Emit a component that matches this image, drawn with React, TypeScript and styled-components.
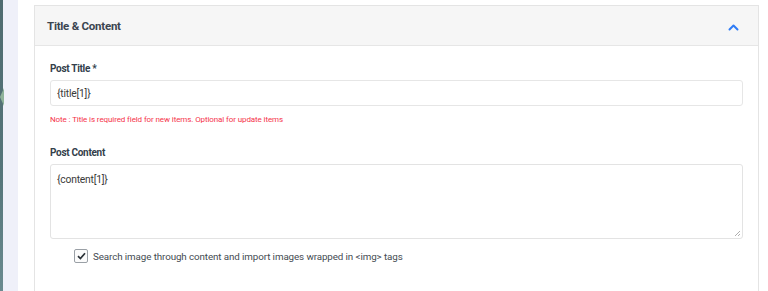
import { FunctionComponent } from 'react';
import styled, { createGlobalStyle } from 'styled-components';

const GlobalStyle = createGlobalStyle`
	html, body {
		margin: 0;
		padding: 0;
		background: #ffffff;
	}
	body {
		font-family: Roboto, 'Liberation Sans', Arial, sans-serif;
	}
`;

const Page = styled.div`
	display: flex;
	height: 291px;
	overflow: hidden;
`;

const Sidebar = styled.div`
	position: relative;
	width: 3px;
	flex-shrink: 0;
	background: linear-gradient(#4f6b70, #55757a 60%, #6a8a8f);
`;

const SidebarNotch = styled.div`
	position: absolute;
	top: 88px;
	left: 0;
	width: 4px;
	height: 18px;
	background: #8fb39a;
	clip-path: polygon(0 50%, 100% 0, 100% 100%);
`;

const Gutter = styled.div`
	width: 15px;
	flex-shrink: 0;
	background: #eff0f9;
`;

const Main = styled.div`
	flex: 1;
	padding: 5px 9px 0 16px;
	background: #ffffff;
`;

const Card = styled.section`
	border: 1px solid #e4e4e4;
	border-bottom: none;
	height: 100%;
	box-sizing: border-box;
`;

const CardHeader = styled.header`
	display: flex;
	align-items: center;
	justify-content: space-between;
	height: 39px;
	padding: 0 19px 0 12px;
	background: #f6f6f6;
	border-bottom: 1px solid #e6e6e6;
`;

const CardTitle = styled.h3`
	margin: 0;
	font-size: 11.5px;
	font-weight: 700;
	letter-spacing: -0.25px;
	color: #3b4550;
`;

const Body = styled.div`
	padding: 16px 15px 0 15px;
`;

const Field = styled.div<{ $gap?: number }>`
	margin-bottom: ${p => p.$gap ?? 0}px;
`;

const Label = styled.label`
	display: block;
	font-size: 10px;
	font-weight: 700;
	letter-spacing: -0.3px;
	color: #33404b;
	margin-bottom: 5px;
	line-height: 13px;
`;

const TextInput = styled.div`
	height: 24px;
	border: 1px solid #e6e6e6;
	border-radius: 3px;
	padding: 0 6px;
	display: flex;
	align-items: center;
	font-size: 10.3px;
	letter-spacing: -0.2px;
	color: #3a3a3a;
`;

const TextArea = styled.div`
	position: relative;
	height: 65px;
	border: 1px solid #e3e3e3;
	border-radius: 3px;
	padding: 8px 6px 0;
	font-size: 10.3px;
	letter-spacing: -0.2px;
	line-height: 13px;
	color: #3a3a3a;
`;

const Grip = styled.svg`
	position: absolute;
	right: 1px;
	bottom: 1px;
`;

const Note = styled.p`
	margin: 8px 0 0;
	font-size: 8px;
	letter-spacing: -0.1px;
	color: #f5334a;
	line-height: 11px;
`;

const CheckRow = styled.div`
	display: flex;
	align-items: center;
	gap: 5px;
	margin: 10px 0 0 24px;
	font-size: 9.8px;
	letter-spacing: -0.1px;
	color: #444b52;
`;

const CheckBox = styled.span`
	display: inline-flex;
	align-items: center;
	justify-content: center;
	width: 12px;
	height: 12px;
	border: 1px solid #9aa0a6;
	border-radius: 2px;
	background: #fbfbfb;
`;

const Chevron: FunctionComponent = () => (
	<svg width="11" height="7" viewBox="0 0 11 7" style={{ marginTop: 3 }}>
		<path d="M1.5 5.5 L5.5 1.5 L9.5 5.5" fill="none" stroke="#2f7cf6" strokeWidth="2" strokeLinecap="round" strokeLinejoin="round" />
	</svg>
);

const App: FunctionComponent = () => (
	<>
		<GlobalStyle />
		<Page>
			<Sidebar>
				<SidebarNotch />
			</Sidebar>
			<Gutter />
			<Main>
				<Card>
					<CardHeader>
						<CardTitle>Title &amp; Content</CardTitle>
						<Chevron />
					</CardHeader>
					<Body>
						<Field $gap={21}>
							<Label>Post Title *</Label>
							<TextInput>{'{title[1]}'}</TextInput>
							<Note>Note : Title is required field for new items. Optional for update items</Note>
						</Field>
						<Field>
							<Label>Post Content</Label>
							<TextArea>
								{'{content[1]}'}
								<Grip width="8" height="8" viewBox="0 0 8 8">
									<path d="M7 2 L2 7 M7 5 L5 7" stroke="#9a9a9a" strokeWidth="0.8" />
								</Grip>
							</TextArea>
						</Field>
						<CheckRow>
							<CheckBox>
								<svg width="9" height="8" viewBox="0 0 9 8">
									<path d="M1 4.2 L3.4 6.6 L8 1.2" fill="none" stroke="#2b3238" strokeWidth="1.7" />
								</svg>
							</CheckBox>
							Search image through content and import images wrapped in &lt;img&gt; tags
						</CheckRow>
					</Body>
				</Card>
			</Main>
		</Page>
	</>
);

export default App;
